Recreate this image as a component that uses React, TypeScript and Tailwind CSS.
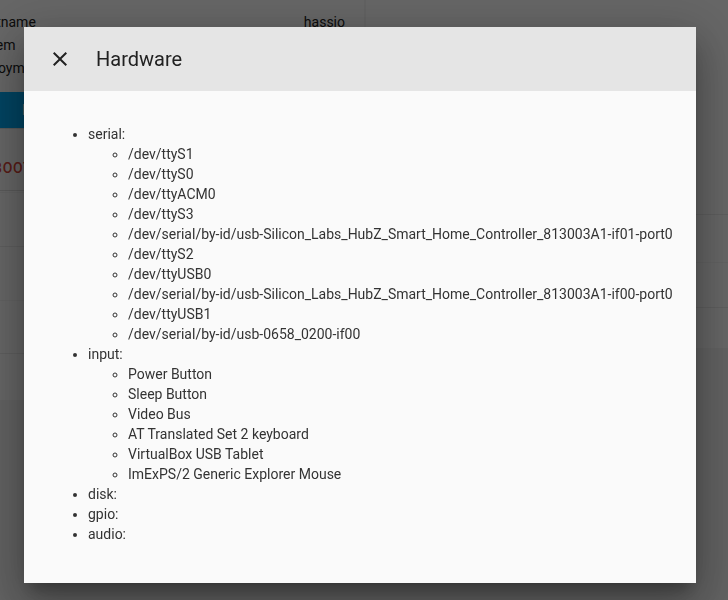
import React from "react"

const serial = [
  "/dev/ttyS1",
  "/dev/ttyS0",
  "/dev/ttyACM0",
  "/dev/ttyS3",
  "/dev/serial/by-id/usb-Silicon_Labs_HubZ_Smart_Home_Controller_813003A1-if01-port0",
  "/dev/ttyS2",
  "/dev/ttyUSB0",
  "/dev/serial/by-id/usb-Silicon_Labs_HubZ_Smart_Home_Controller_813003A1-if00-port0",
  "/dev/ttyUSB1",
  "/dev/serial/by-id/usb-0658_0200-if00",
]

const input = [
  "Power Button",
  "Sleep Button",
  "Video Bus",
  "AT Translated Set 2 keyboard",
  "VirtualBox USB Tablet",
  "ImExPS/2 Generic Explorer Mouse",
]

function Background() {
  return (
    <div className="grid h-[600px] grid-cols-[364px_1fr] gap-[2px] overflow-hidden bg-[#f5f5f5] text-sm text-[#212121]">
      <div className="flex flex-col">
        <div className="flex h-[192px] shrink-0 flex-col bg-white">
          <div className="flex flex-col pt-[10px] pr-[19px]">
            <div className="flex h-[23px] items-center justify-between">
              <span className="-ml-[29px]">Hostname</span>
              <span>hassio</span>
            </div>
            <div className="flex h-[23px] items-center justify-between">
              <span className="-ml-[31px]">System</span>
              <span>HassOS 1.11</span>
            </div>
            <div className="flex h-[23px] items-center justify-between">
              <span className="-ml-[30px]">Deployment</span>
              <span>production</span>
            </div>
          </div>
          <div className="mt-[13px] flex h-[36px] shrink-0 items-center bg-[#03a9f4] pl-[22px] text-white">
            <span className="font-medium">HARDWARE</span>
          </div>
          <div className="h-px bg-[#e0e0e0]" />
          <div className="flex h-[62px] items-start border-b border-[#e0e0e0] pt-[29px]">
            <span className="-ml-[25px] font-medium leading-5 tracking-wider text-[#db4437]">REBOOT</span>
          </div>
        </div>
        <div className="mt-px flex h-[107px] shrink-0 flex-col bg-white">
          <div className="h-[54px] border-b border-[#ececec]" />
        </div>
        <div className="mt-px flex h-[99px] shrink-0 flex-col bg-white">
          <div className="h-[53px] border-b border-[#ececec]" />
        </div>
      </div>
      <div className="flex flex-col">
        <div className="h-[215px] shrink-0 border-b border-[#ececec] bg-white" />
        <div className="h-[47px] shrink-0 bg-white" />
        <div className="mt-px flex h-[85px] shrink-0 flex-col bg-white">
          <div className="h-[45px] border-b border-[#ececec]" />
        </div>
      </div>
    </div>
  )
}

export default function App() {
  return (
    <div className="relative h-[600px] w-[728px] overflow-hidden font-['Roboto',sans-serif]">
      <Background />
      <div className="fixed inset-0 bg-black/60" />
      <div className="fixed left-[24px] top-[27px] flex h-[556px] w-[672px] flex-col bg-[#fafafa] shadow-[0_11px_15px_-7px_rgba(0,0,0,0.3),0_24px_38px_3px_rgba(0,0,0,0.2),0_9px_46px_8px_rgba(0,0,0,0.18)]">
        <div className="flex h-[64px] shrink-0 items-center gap-6 bg-[#e5e5e5] pl-6">
          <svg viewBox="0 0 24 24" className="h-6 w-6 fill-[#212121]">
            <path d="M19,6.41L17.59,5L12,10.59L6.41,5L5,6.41L10.59,12L5,17.59L6.41,19L12,13.41L17.59,19L19,17.59L13.41,12L19,6.41Z" />
          </svg>
          <h2 className="text-[20px] leading-none text-[#212121]">Hardware</h2>
        </div>
        <div className="px-6 pt-4">
          <ul className="mt-[17px] mb-4 list-disc whitespace-nowrap pl-10 text-sm leading-5 text-[#333]">
            <li>
              serial:
              <ul className="list-[circle] pl-10">
                {serial.map((s) => (
                  <li key={s}>{s}</li>
                ))}
              </ul>
            </li>
            <li>
              input:
              <ul className="list-[circle] pl-10">
                {input.map((s) => (
                  <li key={s}>{s}</li>
                ))}
              </ul>
            </li>
            <li>disk:</li>
            <li>gpio:</li>
            <li>audio:</li>
          </ul>
        </div>
      </div>
    </div>
  )
}
